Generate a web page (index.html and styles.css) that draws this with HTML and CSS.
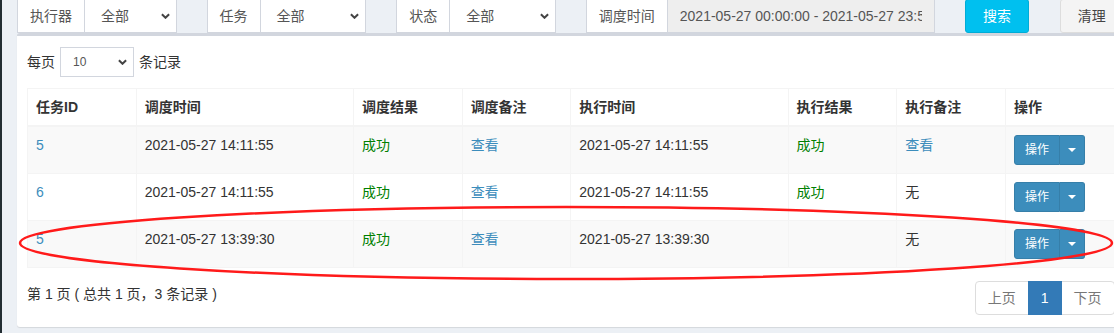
FILE: index.html
```html
<!DOCTYPE html>
<html lang="zh">
<head>
<meta charset="utf-8">
<title>调度日志</title>
<link rel="stylesheet" href="styles.css">
</head>
<body>
<div class="app">
  <div class="edge"></div>
  <div class="content">
    <div class="filters">
      <div class="igroup">
        <span class="addon">执行器</span>
        <div class="select"><span>全部</span><svg class="chev" viewBox="0 0 10 6" width="9" height="6"><path d="M1 1 L5 5 L9 1" fill="none" stroke="#444" stroke-width="2.2"/></svg></div>
      </div>
      <div class="igroup">
        <span class="addon">任务</span>
        <div class="select"><span>全部</span><svg class="chev" viewBox="0 0 10 6" width="9" height="6"><path d="M1 1 L5 5 L9 1" fill="none" stroke="#444" stroke-width="2.2"/></svg></div>
      </div>
      <div class="igroup">
        <span class="addon">状态</span>
        <div class="select"><span>全部</span><svg class="chev" viewBox="0 0 10 6" width="9" height="6"><path d="M1 1 L5 5 L9 1" fill="none" stroke="#444" stroke-width="2.2"/></svg></div>
      </div>
      <div class="igroup">
        <span class="addon">调度时间</span>
        <div class="dateinput"><span class="clip">2021-05-27 00:00:00 - 2021-05-27 23:59:59</span></div>
      </div>
      <div><button class="btn btn-info">搜索</button></div>
      <div><button class="btn btn-default">清理</button></div>
    </div>

    <div class="box">
      <div class="box-body">
        <div class="length">
          <span>每页</span>
          <div class="select select-sm"><span>10</span><svg class="chev" viewBox="0 0 10 6" width="9" height="6"><path d="M1 1 L5 5 L9 1" fill="none" stroke="#444" stroke-width="2.2"/></svg></div>
          <span>条记录</span>
        </div>
        <table class="tbl">
          <colgroup>
            <col class="c10"><col class="c20"><col class="c10"><col class="c10"><col class="c20"><col class="c10"><col class="c10"><col class="c10">
          </colgroup>
          <thead>
            <tr><th>任务ID</th><th>调度时间</th><th>调度结果</th><th>调度备注</th><th>执行时间</th><th>执行结果</th><th>执行备注</th><th>操作</th></tr>
          </thead>
          <tbody>
            <tr>
              <td><a class="link">5</a></td>
              <td>2021-05-27 14:11:55</td>
              <td><span class="ok">成功</span></td>
              <td><a class="link">查看</a></td>
              <td>2021-05-27 14:11:55</td>
              <td><span class="ok">成功</span></td>
              <td><a class="link">查看</a></td>
              <td><div class="split"><span class="sb-main">操作</span><span class="sb-caret"><i class="caret"></i></span></div></td>
            </tr>
            <tr>
              <td><a class="link">6</a></td>
              <td>2021-05-27 14:11:55</td>
              <td><span class="ok">成功</span></td>
              <td><a class="link">查看</a></td>
              <td>2021-05-27 14:11:55</td>
              <td><span class="ok">成功</span></td>
              <td>无</td>
              <td><div class="split"><span class="sb-main">操作</span><span class="sb-caret"><i class="caret"></i></span></div></td>
            </tr>
            <tr>
              <td><a class="link">5</a></td>
              <td>2021-05-27 13:39:30</td>
              <td><span class="ok">成功</span></td>
              <td><a class="link">查看</a></td>
              <td>2021-05-27 13:39:30</td>
              <td></td>
              <td>无</td>
              <td><div class="split"><span class="sb-main">操作</span><span class="sb-caret"><i class="caret"></i></span></div></td>
            </tr>
          </tbody>
        </table>
        <div class="footer">
          <div class="info">第 1 页 ( 总共 1 页，3 条记录 )</div>
          <ul class="pagination">
            <li class="pg disabled">上页</li>
            <li class="pg active">1</li>
            <li class="pg disabled">下页</li>
          </ul>
        </div>
      </div>
    </div>
  </div>
</div>
<svg class="annot" width="1114" height="333" viewBox="0 0 1114 333">
  <ellipse cx="566" cy="243" rx="546" ry="36" fill="none" stroke="#ff1a1a" stroke-width="2.5"/>
</svg>
</body>
</html>
```

FILE: styles.css
```css
html, body {
  margin: 0;
  padding: 0;
  overflow: hidden;
  width: 1114px;
  height: 333px;
}
body {
  background: #ecf0f5;
  font-family: "Liberation Sans", "Noto Sans CJK SC", sans-serif;
  font-size: 14px;
  line-height: 20px;
  color: #333;
  position: relative;
}
.app {
  display: flex;
  align-items: flex-start;
  width: 1140px;
}
.edge {
  width: 2px;
  height: 333px;
  background: #222d32;
  flex: none;
}
.content {
  width: 1107.6px;
  padding: 0 15px;
  flex: none;
}
.filters {
  display: grid;
  grid-template-columns: 159.6px 159.6px 159.6px 349.2px 64.8px 64.8px;
  column-gap: 30px;
  margin-top: -1px;
  height: 34px;
}
.igroup {
  display: flex;
  height: 34px;
}
.addon {
  flex: none;
  box-sizing: border-box;
  height: 34px;
  padding: 6px 12px;
  border: 1px solid #d2d6de;
  background: #fff;
  color: #555;
}
.select {
  flex: 1;
  box-sizing: border-box;
  display: flex;
  align-items: center;
  justify-content: space-between;
  height: 34px;
  padding: 0 6px 0 16px;
  border: 1px solid #d2d6de;
  border-left: none;
  background: #fff;
  color: #555;
}
.chev {
  display: block;
  flex: none;
}
.dateinput {
  flex: 1;
  box-sizing: border-box;
  height: 34px;
  padding: 6px 12px;
  border: 1px solid #d2d6de;
  border-left: none;
  background: #eee;
  color: #555;
  min-width: 0;
}
.clip {
  display: block;
  overflow: hidden;
  white-space: nowrap;
}
.btn {
  display: block;
  width: 64px;
  height: 34px;
  box-sizing: border-box;
  border-radius: 3px;
  font-family: inherit;
  font-size: 14px;
  line-height: 20px;
  padding: 6px 12px;
  margin: 0;
}
.btn-info {
  background: #00c0ef;
  border: 1px solid #00acd6;
  color: #fff;
}
.btn-default {
  background: #f4f4f4;
  border: 1px solid #ddd;
  color: #444;
}
.box {
  background: #fff;
  border-top: 3px solid #d2d6de;
  border-radius: 3px;
  box-shadow: 0 1px 1px rgba(0,0,0,0.1);
}
.box-body {
  padding: 10px;
}
.length {
  display: flex;
  align-items: center;
  gap: 5px;
  height: 32px;
}
.select.select-sm {
  flex: none;
  width: 74px;
  height: 30px;
  padding: 0 6px 0 12px;
  border-left: 1px solid #d2d6de;
  font-size: 12px;
  color: #555;
}
.tbl {
  width: 100%;
  margin-top: 10px;
  border-collapse: collapse;
  table-layout: fixed;
  border: 1px solid #f4f4f4;
}
.c10 { width: 10%; }
.c20 { width: 20%; }
.tbl th, .tbl td {
  border: 1px solid #f4f4f4;
  padding: 8px;
  text-align: left;
  vertical-align: top;
  line-height: 20px;
}
.tbl th {
  font-weight: bold;
  border-bottom: 2px solid #f4f4f4;
}
.tbl tbody tr:nth-child(odd) {
  background: #f9f9f9;
}
.link {
  color: #3c8dbc;
  text-decoration: none;
}
.ok {
  color: green;
}
.split {
  display: inline-flex;
  height: 30px;
}
.sb-main, .sb-caret {
  box-sizing: border-box;
  height: 30px;
  background: #3c8dbc;
  border: 1px solid #367fa9;
  color: #fff;
  font-size: 12px;
  line-height: 18px;
  padding: 5px 10px;
}
.sb-main {
  border-radius: 3px 0 0 3px;
}
.sb-caret {
  display: flex;
  align-items: center;
  padding: 5px 8px;
  border-left: none;
  border-radius: 0 3px 3px 0;
}
.caret {
  display: block;
  width: 0;
  height: 0;
  border-top: 4px solid #fff;
  border-left: 4px solid transparent;
  border-right: 4px solid transparent;
}
.footer {
  display: flex;
  justify-content: space-between;
  align-items: flex-start;
  margin-top: 11px;
}
.info {
  padding-top: 5px;
}
.pagination {
  display: flex;
  list-style: none;
  margin: 2px 0;
  padding: 0;
}
.pg {
  padding: 6px 12px;
  border: 1px solid #ddd;
  margin-left: -1px;
  background: #fff;
  line-height: 20px;
}
.pg:first-child {
  margin-left: 0;
  border-radius: 4px 0 0 4px;
}
.pg:last-child {
  border-radius: 0 4px 4px 0;
}
.pg.disabled {
  color: #777;
}
.pg.active {
  background: #337ab7;
  border-color: #337ab7;
  color: #fff;
  position: relative;
  z-index: 1;
}
.annot {
  position: absolute;
  left: 0;
  top: 0;
  pointer-events: none;
}
```
